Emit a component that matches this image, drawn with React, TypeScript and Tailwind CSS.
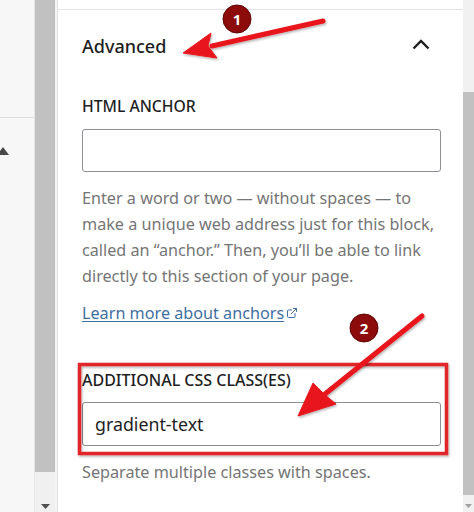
import { ExternalLink } from "lucide-react";

const font = { fontFamily: '"Noto Sans", "Open Sans", sans-serif' };

function Annotations() {
  return (
    <svg className="pointer-events-none absolute inset-0" width={474} height={512} viewBox="0 0 474 512">
      <defs>
        <filter id="shadow" x="-20%" y="-20%" width="140%" height="140%">
          <feDropShadow dx="1" dy="1.5" stdDeviation="1" floodColor="#000" floodOpacity="0.3" />
        </filter>
      </defs>

      {/* red box around the css class field */}
      <rect x={79.5} y={364.5} width={367} height={89} fill="none" stroke="#e0262b" strokeWidth={3.5} filter="url(#shadow)" />

      {/* arrow 1 */}
      <g filter="url(#shadow)" fill="#e8161b" stroke="#e8161b">
        <line x1={323} y1={21} x2={212} y2={46} strokeWidth={5} strokeLinecap="round" />
        <polygon points="183,53 211,33 208,46 217,58" strokeWidth={1} strokeLinejoin="round" />
      </g>

      {/* arrow 2 */}
      <g filter="url(#shadow)" fill="#e8161b" stroke="#e8161b">
        <line x1={422} y1={316} x2={325} y2={394} strokeWidth={5} strokeLinecap="round" />
        <polygon points="298,416 313,383 324,394 336,404" strokeWidth={1} strokeLinejoin="round" />
      </g>

      {/* numbered badges */}
      <g>
        <circle cx={237} cy={19} r={14} fill="#8c0b0b" stroke="#5e0505" strokeWidth={1} />
        <text x={237} y={24.5} textAnchor="middle" fill="#fff" fontSize={15} fontWeight={700} style={font}>
          1
        </text>
        <circle cx={364} cy={328} r={14} fill="#8c0b0b" stroke="#5e0505" strokeWidth={1} />
        <text x={364} y={333.5} textAnchor="middle" fill="#fff" fontSize={15} fontWeight={700} style={font}>
          2
        </text>
      </g>
    </svg>
  );
}

export default function App() {
  return (
    <div className="relative flex h-[512px] w-[474px] overflow-hidden bg-white" style={font}>
      {/* left editor sliver */}
      <div className="flex w-[35px] shrink-0 flex-col border-r border-[#e6e6e6] bg-[#f7f7f8]">
        <div className="h-[118px] border-b border-[#dedede]" />
        <svg className="mt-[29px]" width={10} height={8} viewBox="0 0 10 8">
          <polygon points="-3,8 3,0 9,8" fill="#4a4a4a" />
        </svg>
      </div>

      {/* left scrollbar */}
      <div className="flex w-[20px] shrink-0 flex-col bg-[#f0f0f0]">
        <div className="h-[472px] bg-[#c1c1c1]" />
        <div className="flex flex-1 items-end justify-center pb-[3px]">
          <svg width={9} height={5} viewBox="0 0 9 5">
            <polygon points="0,0 9,0 4.5,5" fill="#505050" />
          </svg>
        </div>
      </div>
      <div className="w-[3px] shrink-0 border-r border-[#e4e4e4] bg-[#f3f3f3]" />

      {/* settings panel */}
      <div className="flex min-w-0 flex-1 flex-col">
        <div className="h-[10px] shrink-0 border-b border-[#e2e4e7]" />
        <div className="flex flex-col pl-[24px] pr-[22px]">
          <div className="flex h-[72px] items-center justify-between">
            <span className="text-[18px] font-medium text-[#1e1e1e]">Advanced</span>
            <svg className="mb-[4px] mr-[11px]" width={18} height={11} viewBox="0 0 18 11">
              <polyline points="1.5,9.5 9,2 16.5,9.5" fill="none" stroke="#1e1e1e" strokeWidth={2.4} />
            </svg>
          </div>

          <label className="mt-[12px] text-[15.7px] font-medium uppercase leading-[24px] text-[#1e1e1e]">
            HTML anchor
          </label>
          <div className="mt-[11px] h-[43px] rounded-[3px] border border-[#8c8f94] bg-white" />
          <p className="mt-[13px] text-[16.2px] leading-[26px] text-[#757575]">
            Enter a word or two — without spaces — to make a unique web address just for this block, called an
            “anchor.” Then, you’ll be able to link directly to this section of your page.
          </p>
          <a
            href="#"
            className="mt-[11px] flex items-center gap-[2px] text-[16.2px] leading-[26px] text-[#3f6f9f] underline underline-offset-2"
          >
            Learn more about anchors
            <ExternalLink className="size-[12px]" strokeWidth={2} />
          </a>

          <label className="mt-[42px] text-[16px] font-medium uppercase leading-[24px] text-[#1e1e1e]">
            Additional CSS class(es)
          </label>
          <div className="mt-[10px] flex h-[44px] items-center rounded-[3px] border border-[#8c8f94] bg-white px-[12px] text-[17.8px] text-[#1e1e1e]">
            gradient-text
          </div>
          <p className="mt-[13px] text-[16.2px] leading-[26px] text-[#757575]">Separate multiple classes with spaces.</p>
        </div>
      </div>

      {/* right scrollbar */}
      <div className="flex w-[11px] shrink-0 flex-col bg-[#f1f1f1]">
        <div className="mt-[92px] h-[403px] bg-[#c1c1c1]" />
        <div className="flex flex-1 items-end justify-center pb-[4px]">
          <svg width={7} height={4} viewBox="0 0 7 4">
            <polygon points="0,0 7,0 3.5,4" fill="#a0a0a0" />
          </svg>
        </div>
      </div>

      <Annotations />
    </div>
  );
}
